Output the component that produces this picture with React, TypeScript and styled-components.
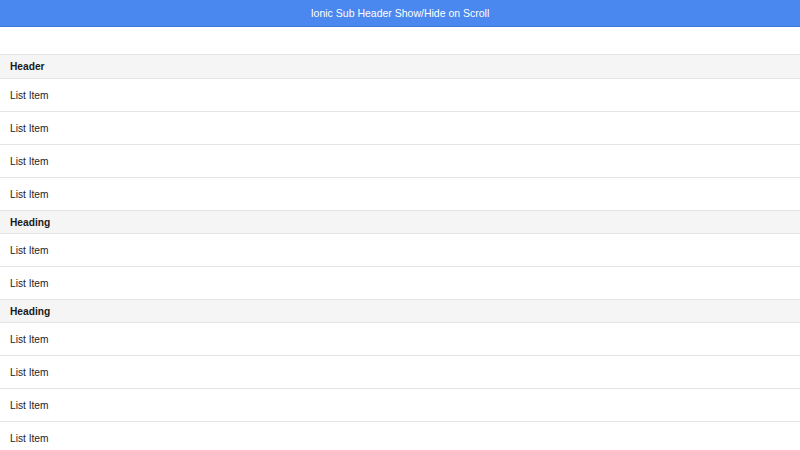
import React from "react";
import styled, { createGlobalStyle } from "styled-components";

const Global = createGlobalStyle`
  html, body { margin: 0; padding: 0; background: #fff; }
  body { font-family: "Liberation Sans", Arial, Helvetica, sans-serif; overflow: hidden; }
`;

const Page = styled.div`
  width: 800px;
  height: 450px;
  overflow: hidden;
  display: flex;
  flex-direction: column;
`;

const Bar = styled.header`
  flex: 0 0 auto;
  height: 26px;
  background: #4a87ee;
  border-bottom: 1px solid #3b76dc;
  display: flex;
  align-items: center;
  justify-content: center;
  color: #fff;
  font-size: 10.5px;
`;

const Spacer = styled.div`
  flex: 0 0 auto;
  height: 27px;
  background: #fff;
`;

const List = styled.div`
  display: flex;
  flex-direction: column;
`;

const Divider = styled.div<{ $first?: boolean }>`
  flex: 0 0 auto;
  box-sizing: border-box;
  height: ${(p) => (p.$first ? "25px" : "23px")};
  border-top: ${(p) => (p.$first ? "1px solid #e4e4e4" : "none")};
  border-bottom: 1px solid #e4e4e4;
  background: #f5f5f5;
  padding: 0 10px;
  display: flex;
  align-items: center;
  font-size: 10.2px;
  font-weight: bold;
  color: #1a1a1a;
`;

const Item = styled.div`
  flex: 0 0 auto;
  height: 33px;
  box-sizing: border-box;
  border-bottom: 1px solid #e4e4e4;
  padding: 0 10px;
  display: flex;
  align-items: center;
  font-size: 10.2px;
  color: #1e1e1e;
`;

const groups = [
  { title: "Header", count: 4 },
  { title: "Heading", count: 2 },
  { title: "Heading", count: 4 },
];

export default function App() {
  return (
    <>
      <Global />
      <Page>
        <Bar>Ionic Sub Header Show/Hide on Scroll</Bar>
        <Spacer />
        <List>
          {groups.map((g, gi) => (
            <React.Fragment key={gi}>
              <Divider $first={gi === 0}>{g.title}</Divider>
              {Array.from({ length: g.count }).map((_, i) => (
                <Item key={i}>List Item</Item>
              ))}
            </React.Fragment>
          ))}
        </List>
      </Page>
    </>
  );
}
